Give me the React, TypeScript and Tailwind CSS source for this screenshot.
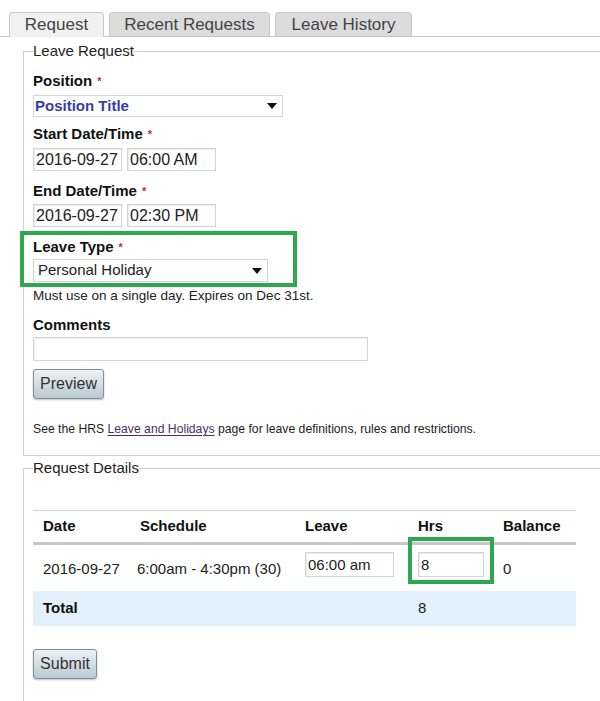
import React from "react";

const font = { fontFamily: '"Liberation Sans", Arial, sans-serif' };

function Req() {
  return <span className="ml-[5px] align-top text-[11px] font-bold text-[#b8312f]">*</span>;
}

function Label({ children }: { children: React.ReactNode }) {
  return (
    <div className="text-[15px] font-bold leading-[18px] text-[#111]">
      {children}
      <Req />
    </div>
  );
}

function Caret() {
  return (
    <svg width="10" height="6" viewBox="0 0 10 6" className="shrink-0">
      <path d="M0 0 L10 0 L5 6 Z" fill="#111" />
    </svg>
  );
}

function TextBox({ value, className }: { value: string; className: string }) {
  return (
    <div
      className={`flex items-center whitespace-nowrap border border-[#d4d4d4] bg-white px-[2px] text-[#222] shadow-[inset_1px_1px_1px_rgba(0,0,0,0.08)] ${className}`}
    >
      {value}
    </div>
  );
}

function Button({ label, className }: { label: string; className: string }) {
  return (
    <div
      className={`flex items-center justify-center rounded-[3px] border border-[#7f8e99] bg-gradient-to-b from-[#edf2f5] to-[#b9c9d3] text-[16px] text-[#333] shadow-[0_1px_2px_rgba(0,0,0,0.25)] ${className}`}
    >
      {label}
    </div>
  );
}

export default function App() {
  return (
    <div className="h-[701px] w-[600px] overflow-hidden bg-white text-[#222]" style={font}>
      {/* tabs */}
      <div className="flex items-end gap-[5px] border-b border-[#c4c4c4] pl-[9px] pt-[12px]">
        <div className="-mb-px flex h-[25px] w-[95px] items-center justify-center rounded-t-[4px] border border-b-0 border-[#c8c8c8] bg-[#f1f1f1] text-[17px] text-[#444]">
          Request
        </div>
        <div className="flex h-[24px] w-[161px] items-center justify-center rounded-t-[4px] border border-b-0 border-[#c8c8c8] bg-[#dcdcdc] text-[17px] text-[#444]">
          Recent Requests
        </div>
        <div className="flex h-[24px] w-[137px] items-center justify-center rounded-t-[4px] border border-b-0 border-[#c8c8c8] bg-[#dcdcdc] text-[17px] text-[#444]">
          Leave History
        </div>
      </div>

      {/* leave request */}
      <fieldset className="ml-[23px] mt-[5px] w-[620px] border border-[#cfcfcf] pb-[18px] pl-[9px]">
        <legend className="text-[15px] leading-[18px] text-[#222]">Leave Request</legend>
        <div className="mt-[12px]">
          <Label>Position</Label>
        </div>
        <div className="mt-[5px] flex h-[22px] w-[250px] items-center justify-between border border-[#d4d4d4] bg-white pl-[1px] pr-[5px]">
          <span className="text-[15px] font-bold text-[#3a3aad]">Position Title</span>
          <Caret />
        </div>

        <div className="mt-[8px]">
          <Label>Start Date/Time</Label>
        </div>
        <div className="mt-[5px] flex gap-[5px]">
          <TextBox value="2016-09-27" className="h-[23px] w-[89px] text-[16px]" />
          <TextBox value="06:00 AM" className="h-[23px] w-[89px] text-[16px]" />
        </div>

        <div className="mt-[11px]">
          <Label>End Date/Time</Label>
        </div>
        <div className="mt-[4px] flex gap-[5px]">
          <TextBox value="2016-09-27" className="h-[23px] w-[89px] text-[16px]" />
          <TextBox value="02:30 PM" className="h-[23px] w-[89px] text-[16px]" />
        </div>

        <div className="relative -ml-[13px] mt-[4px] w-[277px] border-[4px] border-[#2ea84e] pb-[1px] pl-[9px] pt-[3px]">
          <Label>Leave Type</Label>
          <div className="mt-[3px] flex h-[23px] w-[235px] items-center justify-between border border-[#d4d4d4] bg-white pl-[4px] pr-[5px]">
            <span className="text-[15px] text-[#222]">Personal Holiday</span>
            <Caret />
          </div>
        </div>
        <div className="mt-[1px] text-[13.5px] leading-[15px]">Must use on a single day. Expires on Dec 31st.</div>

        <div className="mt-[13px] text-[15px] font-bold leading-[18px] text-[#111]">Comments</div>
        <TextBox value="" className="mt-[3px] h-[24px] w-[335px]" />

        <Button label="Preview" className="mt-[8px] h-[30px] w-[71px]" />

        <div className="mt-[22px] text-[12.2px] leading-[16px]">
          See the HRS{" "}
          <span className="text-[#4d2f66] underline decoration-[#4d2f66] underline-offset-2">Leave and Holidays</span>{" "}
          page for leave definitions, rules and restrictions.
        </div>
      </fieldset>

      {/* request details */}
      <fieldset className="ml-[23px] mt-[3px] h-[300px] w-[620px] border border-[#cfcfcf] pl-[9px]">
        <legend className="text-[15px] leading-[18px] text-[#222]">Request Details</legend>
        <table className="mt-[33px] w-[543px] table-fixed border-collapse text-left text-[15px]">
          <colgroup>
            <col className="w-[97px]" />
            <col className="w-[165px]" />
            <col className="w-[113px]" />
            <col className="w-[85px]" />
            <col className="w-[83px]" />
          </colgroup>
          <thead>
            <tr className="h-[33px] border-b-[3px] border-t border-b-[#c8c8c8] border-t-[#d0d0d0]">
              <th className="pl-[10px] font-bold text-[#111]">Date</th>
              <th className="pl-[10px] font-bold text-[#111]">Schedule</th>
              <th className="pl-[10px] font-bold text-[#111]">Leave</th>
              <th className="pl-[10px] font-bold text-[#111]">Hrs</th>
              <th className="pl-[10px] font-bold text-[#111]">Balance</th>
            </tr>
          </thead>
          <tbody>
            <tr className="h-[47px]">
              <td className="pl-[10px] pt-[2px]">2016-09-27</td>
              <td className="pl-[7px] pt-[2px]">6:00am - 4:30pm (30)</td>
              <td className="pl-[10px] pb-[6px]">
                <TextBox value="06:00 am" className="h-[25px] w-[89px] text-[15px]" />
              </td>
              <td className="relative pl-[10px] pb-[6px]">
                <TextBox value="8" className="h-[25px] w-[66px] text-[15px]" />
                <div className="absolute left-0 top-[-8px] h-[47px] w-[86px] border-[4px] border-[#2ea84e]" />
              </td>
              <td className="pl-[10px] pt-[2px]">0</td>
            </tr>
            <tr className="h-[35px] bg-[#e2f1fb]">
              <td className="pl-[10px] font-bold text-[#111]">Total</td>
              <td />
              <td />
              <td className="pl-[10px]">8</td>
              <td />
            </tr>
          </tbody>
        </table>
        <Button label="Submit" className="mt-[23px] h-[30px] w-[64px]" />
      </fieldset>
    </div>
  );
}
